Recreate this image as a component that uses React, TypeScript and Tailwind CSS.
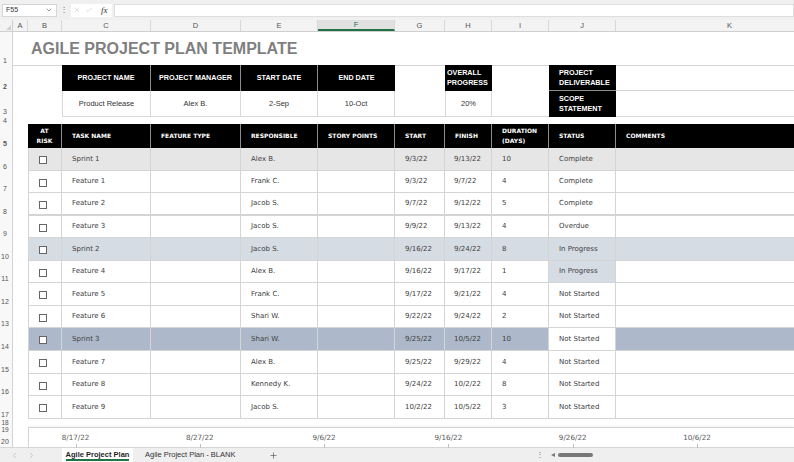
import { ChevronDown, ChevronLeft, ChevronRight, Plus, X, Check } from 'lucide-react';

const UI = "font-['Liberation_Sans',Arial,sans-serif]";
const GOTHIC = "font-['DejaVu_Sans',sans-serif]";

type Task = {
    name: string;
    who: string;
    start: string;
    finish: string;
    dur: string;
    status: string;
    rowBg: string;
    statusBg: string;
    h: string;
    line: string;
};

const tasks: Task[] = [
    { name: 'Sprint 1', who: 'Alex B.', start: '9/3/22', finish: '9/13/22', dur: '10', status: 'Complete', rowBg: 'bg-[#e7e6e6]', statusBg: '', h: 'h-[23px]', line: 'border-b' },
    { name: 'Feature 1', who: 'Frank C.', start: '9/3/22', finish: '9/7/22', dur: '4', status: 'Complete', rowBg: 'bg-white', statusBg: '', h: 'h-[22px]', line: 'border-b' },
    { name: 'Feature 2', who: 'Jacob S.', start: '9/7/22', finish: '9/12/22', dur: '5', status: 'Complete', rowBg: 'bg-white', statusBg: '', h: 'h-[23px]', line: 'border-b-2' },
    { name: 'Feature 3', who: 'Jacob S.', start: '9/9/22', finish: '9/13/22', dur: '4', status: 'Overdue', rowBg: 'bg-white', statusBg: '', h: 'h-[22px]', line: 'border-b' },
    { name: 'Sprint 2', who: 'Jacob S.', start: '9/16/22', finish: '9/24/22', dur: '8', status: 'In Progress', rowBg: 'bg-[#d6dce4]', statusBg: '', h: 'h-[23px]', line: 'border-b' },
    { name: 'Feature 4', who: 'Alex B.', start: '9/16/22', finish: '9/17/22', dur: '1', status: 'In Progress', rowBg: 'bg-white', statusBg: 'bg-[#d6dce4]', h: 'h-[22px]', line: 'border-b' },
    { name: 'Feature 5', who: 'Frank C.', start: '9/17/22', finish: '9/21/22', dur: '4', status: 'Not Started', rowBg: 'bg-white', statusBg: '', h: 'h-[23px]', line: 'border-b' },
    { name: 'Feature 6', who: 'Shari W.', start: '9/22/22', finish: '9/24/22', dur: '2', status: 'Not Started', rowBg: 'bg-white', statusBg: '', h: 'h-[22px]', line: 'border-b' },
    { name: 'Sprint 3', who: 'Shari W.', start: '9/25/22', finish: '10/5/22', dur: '10', status: 'Not Started', rowBg: 'bg-[#adb9ca]', statusBg: 'bg-white', h: 'h-[23px]', line: 'border-b' },
    { name: 'Feature 7', who: 'Alex B.', start: '9/25/22', finish: '9/29/22', dur: '4', status: 'Not Started', rowBg: 'bg-white', statusBg: '', h: 'h-[23px]', line: 'border-b' },
    { name: 'Feature 8', who: 'Kennedy K.', start: '9/24/22', finish: '10/2/22', dur: '8', status: 'Not Started', rowBg: 'bg-white', statusBg: '', h: 'h-[22px]', line: 'border-b' },
    { name: 'Feature 9', who: 'Jacob S.', start: '10/2/22', finish: '10/5/22', dur: '3', status: 'Not Started', rowBg: 'bg-white', statusBg: '', h: 'h-[23px]', line: 'border-b' },
];

const letters: [string, string][] = [
    ['A', 'w-[15px]'], ['B', 'w-[34px]'], ['C', 'w-[89px]'], ['D', 'w-[90px]'], ['E', 'w-[77px]'], ['F', 'w-[77px]'],
    ['G', 'w-[50px]'], ['H', 'w-[47px]'], ['I', 'w-[57px]'], ['J', 'w-[67px]'], ['K', 'w-[228px]'],
];

const axisDates = ['8/17/22', '8/27/22', '9/6/22', '9/16/22', '9/26/22', '10/6/22'];

function RowNum({ n, pad = 'pb-[1px]' }: { n?: string; pad?: string }) {
    return (
        <div className={`w-[13px] shrink-0 h-full flex items-end justify-center pr-[2px] ${pad} bg-[#f8f8f8] border-r border-[#d4d4d4] text-[7px] leading-none text-[#555] ${UI}`}>
            {n}
        </div>
    );
}

function HeadCell({ w, children, center }: { w: string; children: React.ReactNode; center?: boolean }) {
    return (
        <div className={`${w} shrink-0 h-full flex items-center border-r border-[#8c8c8c] leading-[10px] ${center ? 'justify-center text-center' : 'pl-[10px]'}`}>
            <span>{children}</span>
        </div>
    );
}

function Cell({ w, children, className = '' }: { w: string; children?: React.ReactNode; className?: string }) {
    return (
        <div className={`${w} shrink-0 h-full flex items-center border-r border-[#d4d4d4] ${className}`}>
            {children}
        </div>
    );
}

export default function App() {
    return (
        <div className={`w-[794px] h-[462px] overflow-hidden bg-white flex flex-col ${UI}`}>
            {/* formula bar */}
            <div className="h-[20px] shrink-0 flex items-center bg-[#f0f0f0]">
                <div className="ml-[2px] w-[55px] h-[13px] bg-white border border-[#d6d6d6] flex items-center justify-between pl-[3px] pr-[3px] text-[7px] text-[#333]">
                    <span>F55</span>
                    <ChevronDown size={8} className="text-[#666]" />
                </div>
                <div className="w-[14px] text-center text-[8px] text-[#777] leading-none">⋮</div>
                <div className="w-[41px] h-[13px] bg-white flex items-center pl-[2px]">
                    <X size={8} strokeWidth={1.5} className="text-[#bdbdbd]" />
                    <Check size={8} strokeWidth={1.5} className="ml-[4px] text-[#bdbdbd]" />
                    <span className="ml-[8px] font-['Liberation_Serif',serif] italic text-[9px] text-[#333] leading-none">fx</span>
                </div>
                <div className="ml-[2px] flex-1 h-[13px] bg-white border border-[#dedede]" />
            </div>

            {/* column letters */}
            <div className="h-[12px] shrink-0 flex bg-[#f3f3f3] border-b border-[#cfcfcf] text-[7.5px] text-[#555] leading-none">
                <div className="w-[13px] shrink-0 h-full border-r border-[#cfcfcf] relative">
                    <div className="absolute right-[1px] bottom-[1px] w-0 h-0 border-l-[5px] border-l-transparent border-b-[5px] border-b-[#cfcfcf]" />
                </div>
                {letters.map(([l, w]) => (
                    <div
                        key={l}
                        className={`${w} shrink-0 h-full flex items-center justify-center border-r border-[#d8d8d8] ${l === 'F' ? 'bg-[#e1e1e1] border-b-2 border-b-[#217346] text-[#217346]' : ''}`}
                    >
                        {l}
                    </div>
                ))}
            </div>

            {/* row 1: title */}
            <div className="h-[33px] shrink-0 flex">
                <RowNum n="1" />
                <div className="pl-[18px] pt-[9px] text-[16px] font-bold leading-none text-[#7f7f7f] whitespace-nowrap">
                    AGILE PROJECT PLAN TEMPLATE
                </div>
            </div>

            {/* row 2 */}
            <div className="h-[26px] shrink-0 flex text-[7.2px] font-bold text-white">
                <RowNum n="2" />
                <div className="w-[49px] shrink-0 border-t border-[#d4d4d4]" />
                <div className="w-[89px] shrink-0 bg-black border-r border-[#8c8c8c] flex items-center justify-center">PROJECT NAME</div>
                <div className="w-[90px] shrink-0 bg-black border-r border-[#8c8c8c] flex items-center justify-center">PROJECT MANAGER</div>
                <div className="w-[77px] shrink-0 bg-black border-r border-[#8c8c8c] flex items-center justify-center">START DATE</div>
                <div className="w-[77px] shrink-0 bg-black flex items-center justify-center">END DATE</div>
                <div className="w-[50px] shrink-0 border-t border-[#d4d4d4]" />
                <div className="w-[47px] shrink-0 bg-black flex items-center pl-[2px] leading-[10px]">
                    <span>OVERALL<br />PROGRESS</span>
                </div>
                <div className="w-[57px] shrink-0 border-t border-[#d4d4d4]" />
                <div className="w-[67px] shrink-0 bg-black border-b border-[#8c8c8c] flex items-center pl-[10px] leading-[10px]">
                    <span>PROJECT<br />DELIVERABLE</span>
                </div>
                <div className="w-[228px] shrink-0 border-t border-b border-[#d4d4d4]" />
            </div>

            {/* row 3 */}
            <div className="h-[26px] shrink-0 flex text-[7.5px] text-[#333]">
                <RowNum n="3" pad="pb-[2px]" />
                <div className="w-[49px] shrink-0" />
                <div className="w-[89px] shrink-0 border-l border-r border-b border-[#d9d9d9] flex items-center justify-center">Product Release</div>
                <div className="w-[90px] shrink-0 border-r border-b border-[#d9d9d9] flex items-center justify-center">Alex B.</div>
                <div className="w-[77px] shrink-0 border-r border-b border-[#d9d9d9] flex items-center justify-center">2-Sep</div>
                <div className="w-[77px] shrink-0 border-r border-b border-[#d9d9d9] flex items-center justify-center">10-Oct</div>
                <div className="w-[50px] shrink-0 border-b border-[#d9d9d9]" />
                <div className="w-[47px] shrink-0 border-l border-r border-b border-[#d9d9d9] flex items-center justify-center">20%</div>
                <div className="w-[57px] shrink-0 border-b border-[#d9d9d9]" />
                <div className="w-[67px] shrink-0 bg-black text-white font-bold text-[7.2px] flex items-center pl-[10px] leading-[10px]">
                    <span>SCOPE<br />STATEMENT</span>
                </div>
                <div className="w-[228px] shrink-0 border-b border-[#d9d9d9]" />
            </div>

            {/* row 4 */}
            <div className="h-[7px] shrink-0 flex">
                <RowNum n="4" pad="pb-0" />
            </div>

            {/* row 5: task header */}
            <div className={`h-[24px] shrink-0 flex text-[6px] font-bold text-white ${GOTHIC}`}>
                <RowNum n="5" />
                <div className="w-[15px] shrink-0" />
                <div className="flex h-full bg-black">
                    <HeadCell w="w-[34px]" center>AT<br />RISK</HeadCell>
                    <HeadCell w="w-[89px]">TASK NAME</HeadCell>
                    <HeadCell w="w-[90px]">FEATURE TYPE</HeadCell>
                    <HeadCell w="w-[77px]">RESPONSIBLE</HeadCell>
                    <HeadCell w="w-[77px]">STORY POINTS</HeadCell>
                    <HeadCell w="w-[50px]">START</HeadCell>
                    <HeadCell w="w-[47px]">FINISH</HeadCell>
                    <HeadCell w="w-[57px]">DURATION<br />(DAYS)</HeadCell>
                    <HeadCell w="w-[67px]">STATUS</HeadCell>
                    <HeadCell w="w-[228px]">COMMENTS</HeadCell>
                </div>
            </div>

            {/* task rows */}
            {tasks.map((t, i) => (
                <div key={t.name} className={`${t.h} shrink-0 flex text-[7px] text-[#404040] ${GOTHIC}`}>
                    <RowNum n={String(i + 6)} />
                    <div className="w-[15px] shrink-0" />
                    <div className={`flex h-full ${t.line} border-b-[#d4d4d4] ${t.rowBg}`}>
                        <Cell w="w-[34px]" className="border-l pl-[10px]">
                            <div className="w-[8px] h-[8px] mt-[2px] border border-[#666] bg-white" />
                        </Cell>
                        <Cell w="w-[89px]" className="pl-[10px]">{t.name}</Cell>
                        <Cell w="w-[90px]" />
                        <Cell w="w-[77px]" className="pl-[10px]">{t.who}</Cell>
                        <Cell w="w-[77px]" />
                        <Cell w="w-[50px]" className="pl-[10px]">{t.start}</Cell>
                        <Cell w="w-[47px]" className="pl-[9px]">{t.finish}</Cell>
                        <Cell w="w-[57px]" className="pl-[10px]">{t.dur}</Cell>
                        <Cell w="w-[67px]" className={`pl-[10px] ${t.statusBg}`}>{t.status}</Cell>
                        <Cell w="w-[228px]" />
                    </div>
                </div>
            ))}

            {/* rows 18-20 with timeline chart */}
            <div className="h-[28px] shrink-0 flex">
                <div className={`w-[13px] shrink-0 h-full flex flex-col bg-[#f8f8f8] border-r border-[#d4d4d4] text-[6.5px] leading-none text-[#555] ${UI}`}>
                    <div className="h-[7px] flex items-end justify-center pr-[2px]">18</div>
                    <div className="h-[7px] flex items-end justify-center pr-[2px]">19</div>
                    <div className="h-[13px] flex items-end justify-center pr-[2px] pb-[1px] text-[7px]">20</div>
                </div>
                <div className="w-[15px] shrink-0" />
                <div className="flex-1 mt-[8px] relative bg-white border-l border-t border-[#d6d6d6] shadow-[0_-1px_2px_rgba(0,0,0,0.06)]">
                    {axisDates.map((d, i) => (
                        <div key={d}>
                            <div
                                className={`absolute top-[6px] -translate-x-1/2 text-[7.2px] leading-none text-[#595959] ${GOTHIC}`}
                                style={{ left: 46.5 + i * 124.3 }}
                            >
                                {d}
                            </div>
                            <div className="absolute top-[16px] w-px h-[4px] bg-[#bfbfbf]" style={{ left: 46.5 + i * 124.3 }} />
                        </div>
                    ))}
                </div>
            </div>

            {/* sheet tabs */}
            <div className="h-[15px] shrink-0 flex items-center bg-[#efefef] border-t border-[#d6d6d6] text-[7.5px]">
                <div className="w-[62px] shrink-0 h-full flex items-center pl-[10px] gap-[8px] text-[#b8b8b8]">
                    <ChevronLeft size={9} />
                    <ChevronRight size={9} />
                </div>
                <div className="w-[71px] shrink-0 h-full bg-white flex items-center justify-center">
                    <span className="font-bold text-[#1f1f1f] border-b-2 border-[#217346] leading-[9px]">Agile Project Plan</span>
                </div>
                <div className="w-[110px] shrink-0 pl-[12px] text-[#333] whitespace-nowrap">Agile Project Plan - BLANK</div>
                <div className="w-[60px] shrink-0 flex justify-center text-[#666]">
                    <Plus size={9} />
                </div>
                <div className="w-[233px] shrink-0" />
                <div className="w-[8px] shrink-0 text-center text-[8px] text-[#777] leading-none">⋮</div>
                <div className="ml-[7px] w-0 h-0 border-y-[2.5px] border-y-transparent border-r-[4px] border-r-[#777]" />
                <div className="ml-[3px] w-[35px] h-[4px] rounded-full bg-[#787878]" />
            </div>
        </div>
    );
}
